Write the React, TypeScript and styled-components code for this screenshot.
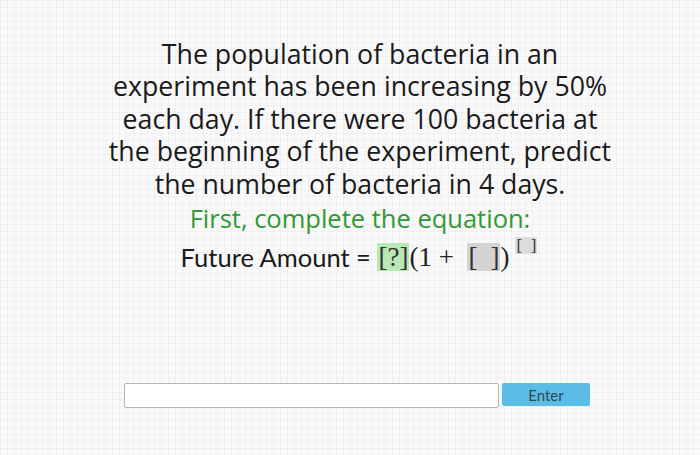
import styled, { createGlobalStyle } from "styled-components";

const GlobalStyle = createGlobalStyle`
  html, body {
    margin: 0;
    padding: 0;
  }
  body {
    width: 700px;
    height: 455px;
    overflow: hidden;
    background-color: #f9f9fa;
    background-image:
      linear-gradient(to right, rgba(215, 215, 222, 0.25) 1px, transparent 1px),
      linear-gradient(to bottom, rgba(215, 215, 222, 0.25) 1px, transparent 1px);
    background-size: 7px 7px;
  }
`;

const Page = styled.div`
  width: 700px;
  height: 455px;
  box-sizing: border-box;
  padding: 38px 0 0 20px;
  display: flex;
  flex-direction: column;
  align-items: center;
`;

const Question = styled.p`
  margin: 0;
  text-align: center;
  font-family: "Open Sans", sans-serif;
  font-size: 26.7px;
  line-height: 32.4px;
  color: #1a1a1a;
`;

const Prompt = styled.p`
  margin: 2px 0 0 0;
  font-family: "Open Sans", sans-serif;
  font-size: 25.5px;
  line-height: 32px;
  color: #2f9a35;
`;

const Equation = styled.div`
  margin-top: 7px;
  margin-left: -2px;
  display: flex;
  align-items: center;
  font-family: Lato, sans-serif;
  font-size: 25.5px;
  line-height: 32px;
  color: #1a1a1a;
`;

const Op = styled.span`
  font-family: "Liberation Serif", "DejaVu Serif", serif;
  font-size: 27px;
  color: #222;
`;

const Slot = styled.span<{ $fill: string; $w: number }>`
  display: inline-flex;
  align-items: center;
  justify-content: space-between;
  box-sizing: border-box;
  width: ${(p) => p.$w}px;
  height: 28px;
  padding: 0 1px;
  background: ${(p) => p.$fill};
  font-family: "Liberation Serif", serif;
  font-size: 27px;
  color: #333;
`;

const SupSlot = styled.span`
  align-self: flex-start;
  display: inline-flex;
  align-items: center;
  justify-content: space-between;
  box-sizing: border-box;
  width: 22px;
  height: 17px;
  margin-left: 6px;
  margin-top: -4px;
  padding: 0 1px;
  background: #dcdcdc;
  font-family: "Liberation Serif", serif;
  font-size: 17px;
  line-height: 17px;
  color: #333;
`;

const AnswerRow = styled.div`
  margin-top: 110px;
  margin-left: -6px;
  display: flex;
  align-items: flex-start;
  gap: 3px;
`;

const AnswerInput = styled.input`
  width: 375px;
  height: 25px;
  box-sizing: border-box;
  border: 1px solid #b4b4b4;
  border-radius: 2px;
  background: #fff;
  outline: none;
`;

const EnterButton = styled.button`
  width: 88px;
  height: 23px;
  border: none;
  border-radius: 2px;
  background: #5bbde6;
  color: #2f4655;
  font-family: Lato, sans-serif;
  font-size: 15px;
  padding: 0;
`;

export default function App() {
  return (
    <>
      <GlobalStyle />
      <Page>
        <Question>
          The population of bacteria in an
          <br />
          experiment has been increasing by 50%
          <br />
          each day. If there were 100 bacteria at
          <br />
          the beginning of the experiment, predict
          <br />
          the number of bacteria in 4 days.
        </Question>
        <Prompt>First, complete the equation:</Prompt>
        <Equation>
          <span>Future Amount&nbsp;=&nbsp;</span>
          <Slot $fill="#b8e9b4" $w={32}>[?]</Slot>
          <Op>(1&nbsp;+&nbsp;&nbsp;</Op>
          <Slot $fill="#d4d4d4" $w={33}>
            <span>[</span>
            <span>]</span>
          </Slot>
          <Op>)</Op>
          <SupSlot>
            <span>[</span>
            <span>]</span>
          </SupSlot>
        </Equation>
        <AnswerRow>
          <AnswerInput type="text" />
          <EnterButton>Enter</EnterButton>
        </AnswerRow>
      </Page>
    </>
  );
}
